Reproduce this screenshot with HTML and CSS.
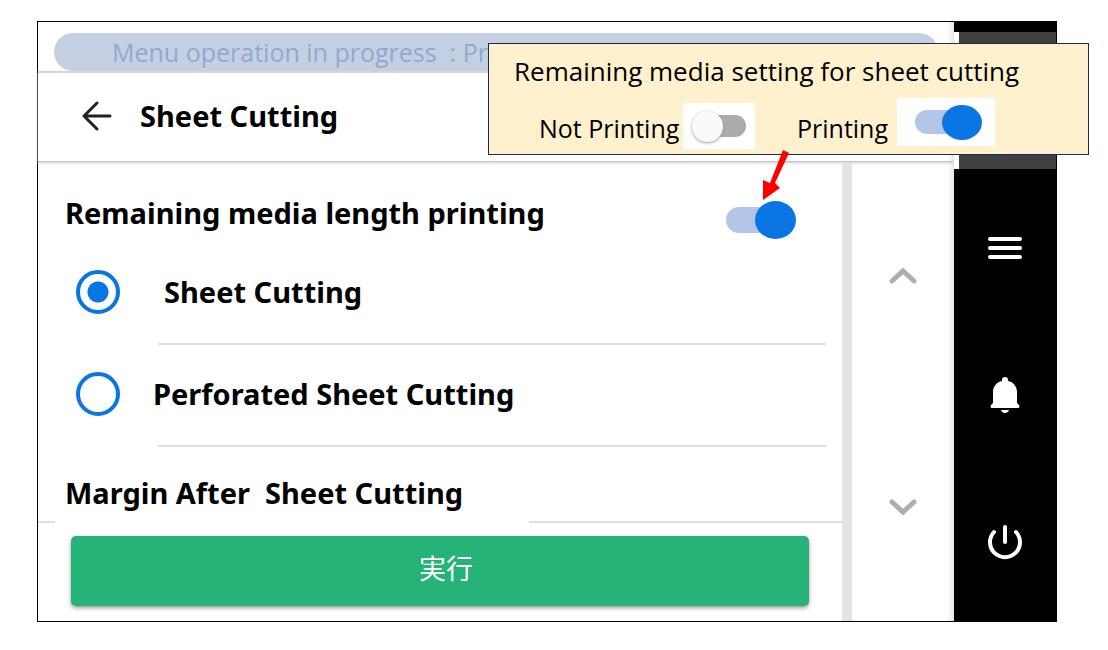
FILE: index.html
```html
<!DOCTYPE html>
<html lang="en">
<head>
    <meta charset="UTF-8">
    <meta name="viewport" content="width=device-width, initial-scale=1.0">
    <title>Sheet Cutting</title>
    <link rel="stylesheet" href="styles.css">
</head>
<body>
    <div class="device">
        <main class="screen">
            <div class="status">
                <p class="status-pill">Menu operation in progress&nbsp; : Press [Home] to enable.</p>
            </div>
            <header class="title-bar">
                <button class="icon-button" type="button" aria-label="Back">
                    <svg width="30" height="30" viewBox="0 0 30 30" fill="none" stroke="#222" stroke-width="3" stroke-linecap="round" stroke-linejoin="round">
                        <path d="M28 15H2M15 2L2 15l13 13"/>
                    </svg>
                </button>
                <h1>Sheet Cutting</h1>
            </header>
            <div class="panel">
                <form class="settings">
                    <div class="setting">
                        <label for="length-printing">Remaining media length printing</label>
                        <input class="switch" type="checkbox" id="length-printing" checked>
                    </div>
                    <div class="option">
                        <input type="radio" name="cutting" id="sheet" checked>
                        <label class="indent" for="sheet">Sheet Cutting</label>
                    </div>
                    <div class="option">
                        <input type="radio" name="cutting" id="perforated">
                        <label for="perforated">Perforated Sheet Cutting</label>
                    </div>
                    <h2>Margin After&nbsp; Sheet Cutting</h2>
                    <div class="rule"><span></span><span></span></div>
                    <button class="run" type="submit" lang="ja">実行</button>
                </form>
                <div class="scroller">
                    <button class="icon-button" type="button" aria-label="Scroll up">
                        <svg width="28" height="18" viewBox="0 0 28 18" fill="none" stroke="#aeaeae" stroke-width="5" stroke-linecap="round" stroke-linejoin="miter">
                            <path d="M3 14L14 4l11 10"/>
                        </svg>
                    </button>
                    <button class="icon-button" type="button" aria-label="Scroll down">
                        <svg width="28" height="18" viewBox="0 0 28 18" fill="none" stroke="#aeaeae" stroke-width="5" stroke-linecap="round" stroke-linejoin="miter">
                            <path d="M3 4l11 10L25 4"/>
                        </svg>
                    </button>
                </div>
            </div>
        </main>
        <nav class="sidebar">
            <div class="display"></div>
            <button class="icon-button" type="button" aria-label="Menu">
                <svg width="36" height="36" viewBox="0 0 36 36" stroke="#fff" stroke-width="4" stroke-linecap="round">
                    <path d="M3 9h30M3 18h30M3 27h30"/>
                </svg>
            </button>
            <button class="icon-button" type="button" aria-label="Notifications">
                <svg width="36" height="36" viewBox="0 0 36 36" fill="#fff">
                    <path d="M18 0a3 3 0 0 1 3 3v1c5 1 9 5 9 11v11l2 2c1 2 0 3-1 3H5c-1 0-2-1-1-3l2-2V15C6 9 10 5 15 4V3a3 3 0 0 1 3-3z"/>
                    <path d="M14 33h8c-1 4-7 4-8 0z"/>
                </svg>
            </button>
            <button class="icon-button" type="button" aria-label="Power">
                <svg width="36" height="36" viewBox="0 0 36 36" fill="none" stroke="#fff" stroke-width="4" stroke-linecap="round">
                    <path d="M18 3v15M7 8a15 15 0 1 0 22 0"/>
                </svg>
            </button>
        </nav>

        <aside class="callout">
            <p>Remaining media setting for sheet cutting</p>
            <div class="states">
                <label for="state-off">Not Printing</label>
                <span class="swatch swatch-off"><input class="switch" type="checkbox" id="state-off"></span>
                <label for="state-on">Printing</label>
                <span class="swatch"><input class="switch" type="checkbox" id="state-on" checked></span>
            </div>
            <svg class="arrow" width="28" height="52" viewBox="0 0 28 52" fill="#f00">
                <path d="M21 0l6 3-14 30 5 5L1 50V30l7 3z"/>
            </svg>
        </aside>
    </div>
</body>
</html>
```

FILE: styles.css
```css
* {
    box-sizing: border-box;
}
body {
    margin: 0;
    padding: 21px 51px 28px 37px;
    background: #fff;
    color: #000;
    font-family: "Open Sans", "Noto Sans CJK JP", sans-serif;
    font-size: 25px;
    line-height: 38px;
}
h1, h2, p {
    margin: 0;
}
h1, h2, .setting label, .option label {
    font-family: "Noto Sans", sans-serif;
    font-size: 29px;
    font-weight: bold;
    line-height: 38px;
}
.device {
    position: relative;
    display: flex;
    border: 1px solid #000;
}
.screen {
    flex: 1;
    display: flex;
    flex-direction: column;
    box-shadow: inset -6px 0 6px -4px #ddd;
}
.status {
    padding: 11px 16px 0;
}
.status-pill {
    height: 38px;
    padding-left: 58px;
    border-radius: 19px;
    background: #c4d0e2;
    color: #90aace;
    white-space: nowrap;
    overflow: hidden;
}
.title-bar {
    display: flex;
    align-items: center;
    gap: 28px;
    height: 91px;
    padding: 0 44px 2px;
    border-top: 2px solid #d5d5d5;
    border-bottom: 1px solid #c4c4c4;
    box-shadow: 0 1px 3px #ccc;
}
.icon-button {
    display: flex;
    padding: 0;
    border: none;
    background: none;
    cursor: pointer;
}
.panel {
    flex: 1;
    display: flex;
}
.settings {
    flex: 1;
    padding-bottom: 15px;
    border-right: 10px solid #e2e3e5;
}
.setting {
    display: flex;
    align-items: flex-end;
    justify-content: space-between;
    padding: 32px 46px 4px 27px;
}
.setting label {
    padding-bottom: 7px;
}
.option {
    display: flex;
    align-items: center;
    height: 102px;
    margin-right: 16px;
    padding: 0 0 5px 38px;
    background: linear-gradient(#dedede, #dedede) right bottom / calc(100% - 120px) 2px no-repeat;
}
.option label {
    padding-left: 33px;
}
.option .indent {
    padding-left: 44px;
}
.option input {
    appearance: none;
    width: 44px;
    height: 44px;
    margin: 0;
    border: 4px solid #0a76e4;
    border-radius: 50%;
}
.option input:checked {
    background: radial-gradient(circle, #0a76e4 10px, transparent 11px);
}
h2 {
    padding: 27px 27px 9px;
}
.rule {
    display: flex;
}
.rule span {
    width: 17px;
    height: 2px;
    background: #dedede;
}
.rule span:last-child {
    flex: 1;
    margin-left: 474px;
}
.run {
    display: block;
    width: calc(100% - 66px);
    height: 70px;
    margin: 13px 33px 0;
    padding: 0 0 8px 12px;
    border: none;
    border-radius: 5px;
    background: #25b377;
    box-shadow: 0 2px 4px #999;
    color: #fff;
    font-family: "Noto Sans CJK JP", sans-serif;
    font-size: 27px;
}
.scroller {
    display: flex;
    flex-direction: column;
    align-items: center;
    justify-content: space-between;
    width: 102px;
    padding: 105px 0;
}
.sidebar {
    display: flex;
    flex-direction: column;
    align-items: center;
    width: 102px;
    gap: 111px;
    padding-top: 10px;
    background: #000;
}
.display {
    align-self: stretch;
    height: 137px;
    margin-bottom: -50px;
    border-left: 5px solid #fff;
    background: #404040;
}

/* on/off switch */
.switch {
    appearance: none;
    display: grid;
    flex: none;
    align-items: center;
    width: 70px;
    height: 38px;
    margin: 0;
}
.switch::before, .switch::after {
    content: "";
    grid-area: 1 / 1;
}
.switch::before {
    height: 26px;
    margin-right: 16px;
    border-radius: 13px;
    background: #b3c6e8;
}
.switch::after {
    justify-self: end;
    width: 41px;
    height: 38px;
    border-radius: 50%;
    background: #0a76e4;
}

/* explanation box over the screen */
.callout {
    position: absolute;
    top: 21px;
    right: -33px;
    width: 601px;
    height: 112px;
    padding: 8px 25px;
    border: 1px solid #1c2b50;
    background: #fff1ce;
}
.callout p {
    font-size: 26px;
}
.states {
    display: grid;
    grid-template-columns: 144px 114px 100px 98px;
    align-items: start;
    padding-left: 25px;
}
.states label {
    margin-top: 19px;
}
.swatch {
    display: flex;
    align-items: center;
    justify-content: center;
    height: 48px;
    margin-top: 8px;
    padding-left: 4px;
    background: #fff;
}
.swatch .switch {
    width: 67px;
    height: 35px;
}
.swatch .switch::before {
    height: 24px;
}
.swatch .switch::after {
    width: 40px;
    height: 35px;
}
.swatch-off {
    width: 72px;
    height: 46px;
    margin-top: 13px;
    padding: 0;
}
.swatch-off .switch {
    width: 54px;
}
.swatch-off .switch::before {
    height: 22px;
    margin: 0 0 0 16px;
    background: #ababab;
}
.swatch-off .switch::after {
    justify-self: start;
    width: 31px;
    height: 31px;
    background: #fafafa;
    box-shadow: 0 1px 3px #999;
}
.arrow {
    position: absolute;
    top: 106px;
    left: 273px;
}
```
